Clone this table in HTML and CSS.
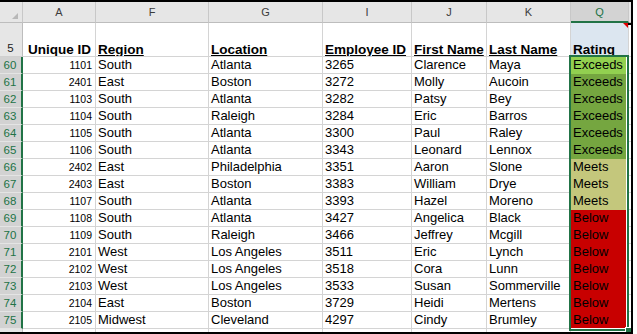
FILE: index.html
```html
<!DOCTYPE html>
<html>
<head>
<meta charset="utf-8">
<link rel="stylesheet" href="styles.css">
</head>
<body>
<div class="sheet">
  <div class="row hdr">
    <div class="c corner"><svg class="tri" width="6" height="6" viewBox="0 0 6 6"><polygon points="6,0 6,6 0,6" fill="#b8b8b8"/></svg></div>
    <div class="c ch">A</div>
    <div class="c ch">F</div>
    <div class="c ch">G</div>
    <div class="c ch">I</div>
    <div class="c ch">J</div>
    <div class="c ch">K</div>
    <div class="c ch chs">Q</div>
    <div class="c ch last"></div>
  </div>
  <div class="row r5">
    <div class="c rh">5</div>
    <div class="c th center">Unique ID</div>
    <div class="c th"><u>Region</u></div>
    <div class="c th"><u>Location</u></div>
    <div class="c th"><u>Employee ID</u></div>
    <div class="c th"><u>First Name</u></div>
    <div class="c th"><u>Last Name</u></div>
    <div class="c th q5"><u>Rating</u></div>
    <div class="c last"></div>
  </div>
  <div class="row"><div class="c rh sel">60</div><div class="c num">1101</div><div class="c">South</div><div class="c">Atlanta</div><div class="c">3265</div><div class="c">Clarence</div><div class="c">Maya</div><div class="c ex act">Exceeds</div><div class="c last"></div></div>
  <div class="row"><div class="c rh sel">61</div><div class="c num">2401</div><div class="c">East</div><div class="c">Boston</div><div class="c">3272</div><div class="c">Molly</div><div class="c">Aucoin</div><div class="c ex">Exceeds</div><div class="c last"></div></div>
  <div class="row"><div class="c rh sel">62</div><div class="c num">1103</div><div class="c">South</div><div class="c">Atlanta</div><div class="c">3282</div><div class="c">Patsy</div><div class="c">Bey</div><div class="c ex">Exceeds</div><div class="c last"></div></div>
  <div class="row"><div class="c rh sel">63</div><div class="c num">1104</div><div class="c">South</div><div class="c">Raleigh</div><div class="c">3284</div><div class="c">Eric</div><div class="c">Barros</div><div class="c ex">Exceeds</div><div class="c last"></div></div>
  <div class="row"><div class="c rh sel">64</div><div class="c num">1105</div><div class="c">South</div><div class="c">Atlanta</div><div class="c">3300</div><div class="c">Paul</div><div class="c">Raley</div><div class="c ex">Exceeds</div><div class="c last"></div></div>
  <div class="row"><div class="c rh sel">65</div><div class="c num">1106</div><div class="c">South</div><div class="c">Atlanta</div><div class="c">3343</div><div class="c">Leonard</div><div class="c">Lennox</div><div class="c ex">Exceeds</div><div class="c last"></div></div>
  <div class="row"><div class="c rh sel">66</div><div class="c num">2402</div><div class="c">East</div><div class="c">Philadelphia</div><div class="c">3351</div><div class="c">Aaron</div><div class="c">Slone</div><div class="c me">Meets</div><div class="c last"></div></div>
  <div class="row"><div class="c rh sel">67</div><div class="c num">2403</div><div class="c">East</div><div class="c">Boston</div><div class="c">3383</div><div class="c">William</div><div class="c">Drye</div><div class="c me">Meets</div><div class="c last"></div></div>
  <div class="row"><div class="c rh sel">68</div><div class="c num">1107</div><div class="c">South</div><div class="c">Atlanta</div><div class="c">3393</div><div class="c">Hazel</div><div class="c">Moreno</div><div class="c me">Meets</div><div class="c last"></div></div>
  <div class="row"><div class="c rh sel">69</div><div class="c num">1108</div><div class="c">South</div><div class="c">Atlanta</div><div class="c">3427</div><div class="c">Angelica</div><div class="c">Black</div><div class="c be">Below</div><div class="c last"></div></div>
  <div class="row"><div class="c rh sel">70</div><div class="c num">1109</div><div class="c">South</div><div class="c">Raleigh</div><div class="c">3466</div><div class="c">Jeffrey</div><div class="c">Mcgill</div><div class="c be">Below</div><div class="c last"></div></div>
  <div class="row"><div class="c rh sel">71</div><div class="c num">2101</div><div class="c">West</div><div class="c">Los Angeles</div><div class="c">3511</div><div class="c">Eric</div><div class="c">Lynch</div><div class="c be">Below</div><div class="c last"></div></div>
  <div class="row"><div class="c rh sel">72</div><div class="c num">2102</div><div class="c">West</div><div class="c">Los Angeles</div><div class="c">3518</div><div class="c">Cora</div><div class="c">Lunn</div><div class="c be">Below</div><div class="c last"></div></div>
  <div class="row"><div class="c rh sel">73</div><div class="c num">2103</div><div class="c">West</div><div class="c">Los Angeles</div><div class="c">3533</div><div class="c">Susan</div><div class="c">Sommerville</div><div class="c be">Below</div><div class="c last"></div></div>
  <div class="row"><div class="c rh sel">74</div><div class="c num">2104</div><div class="c">East</div><div class="c">Boston</div><div class="c">3729</div><div class="c">Heidi</div><div class="c">Mertens</div><div class="c be">Below</div><div class="c last"></div></div>
  <div class="row"><div class="c rh sel">75</div><div class="c num">2105</div><div class="c">Midwest</div><div class="c">Cleveland</div><div class="c">4297</div><div class="c">Cindy</div><div class="c">Brumley</div><div class="c be">Below</div><div class="c last"></div></div>
  <div class="row"><div class="c rh">76</div><div class="c num">2106</div><div class="c">West</div><div class="c">Los Angeles</div><div class="c">4320</div><div class="c">Christopher</div><div class="c">Fulton</div><div class="c">Below</div><div class="c last"></div></div>

  <div class="selbox"><span class="handle"></span></div>
  <span class="comment"></span>
  <span class="arrow"></span>
</div>
</body>
</html>
```
FILE: styles.css
```css
html, body {
  margin: 0;
  padding: 0;
  background: #ffffff;
}
.sheet {
  position: relative;
  width: 631px;
  height: 330px;
  border-top: 2px solid #000;
  border-right: 2px solid #000;
  border-bottom: 2px solid #000;
  overflow: hidden;
  font-family: "Liberation Sans", Arial, sans-serif;
  font-size: 13px;
  color: #000;
}
.row {
  display: grid;
  grid-template-columns: 23px 73px 113px 114px 89px 75px 84px 58px 2px;
  height: 17px;
}
.c {
  box-sizing: border-box;
  border-right: 1px solid #d4d4d4;
  border-bottom: 1px solid #d4d4d4;
  padding: 0 2px;
  white-space: nowrap;
  overflow: hidden;
  display: flex;
  align-items: flex-end;
  line-height: 16px;
}
.last {
  border-right: none;
  padding: 0;
}
.hdr {
  height: 21px;
}
.hdr .c {
  background: #e6e6e6;
  border-right-color: #c8c8c8;
  border-bottom-color: #bdbdbd;
  align-items: center;
  justify-content: center;
  font-size: 11px;
  color: #3c3c3c;
}
.corner {
  position: relative;
}
.tri {
  position: absolute;
  left: 12px;
  top: 11px;
}
.hdr .chs {
  background: #d3d3d3;
  color: #217346;
  border-bottom: 2px solid #217346;
}
.r5 {
  height: 34px;
}
.th {
  font-weight: bold;
  font-size: 13.5px;
  line-height: 13px;
  padding-left: 2px;
}
.center {
  justify-content: center;
  padding: 0 0 0 1px;
}
.q5 {
  background: #dce6f0;
}
.rh {
  background: #e6e6e6;
  border-right-color: #bdbdbd;
  border-bottom-color: #d0d0d0;
  justify-content: center;
  font-size: 11.5px;
  color: #222;
  padding: 0;
  padding-right: 1px;
}
.rh.sel {
  background: #d2d2d2;
  color: #217346;
  border-right: 2px solid #217346;
  border-bottom-color: #e4e4e4;
}
.num {
  justify-content: flex-end;
  font-size: 10.5px;
  padding-right: 3px;
}
.ex {
  background: #75a640;
  border-color: #75a640;
}
.ex.act {
  background: #92d050;
  border-color: #92d050;
}
.me {
  background: #c4c77c;
  border-color: #c4c77c;
}
.be {
  background: #c80000;
  border-color: #c80000;
}
.selbox {
  position: absolute;
  left: 569px;
  top: 53px;
  width: 56px;
  height: 272px;
  border: 2px solid #217346;
  box-shadow: inset -1px -1px 0 #ffffff;
}
.handle {
  position: absolute;
  right: -5px;
  bottom: -5px;
  width: 5px;
  height: 5px;
  background: #217346;
  border: 1px solid #ffffff;
}
.comment {
  position: absolute;
  left: 623px;
  top: 21px;
  width: 0;
  height: 0;
  border-left: 5px solid transparent;
  border-top: 5px solid #e00000;
}
.arrow {
  position: absolute;
  left: 628px;
  top: 21px;
  width: 3px;
  height: 2px;
  background: #000;
}
```
